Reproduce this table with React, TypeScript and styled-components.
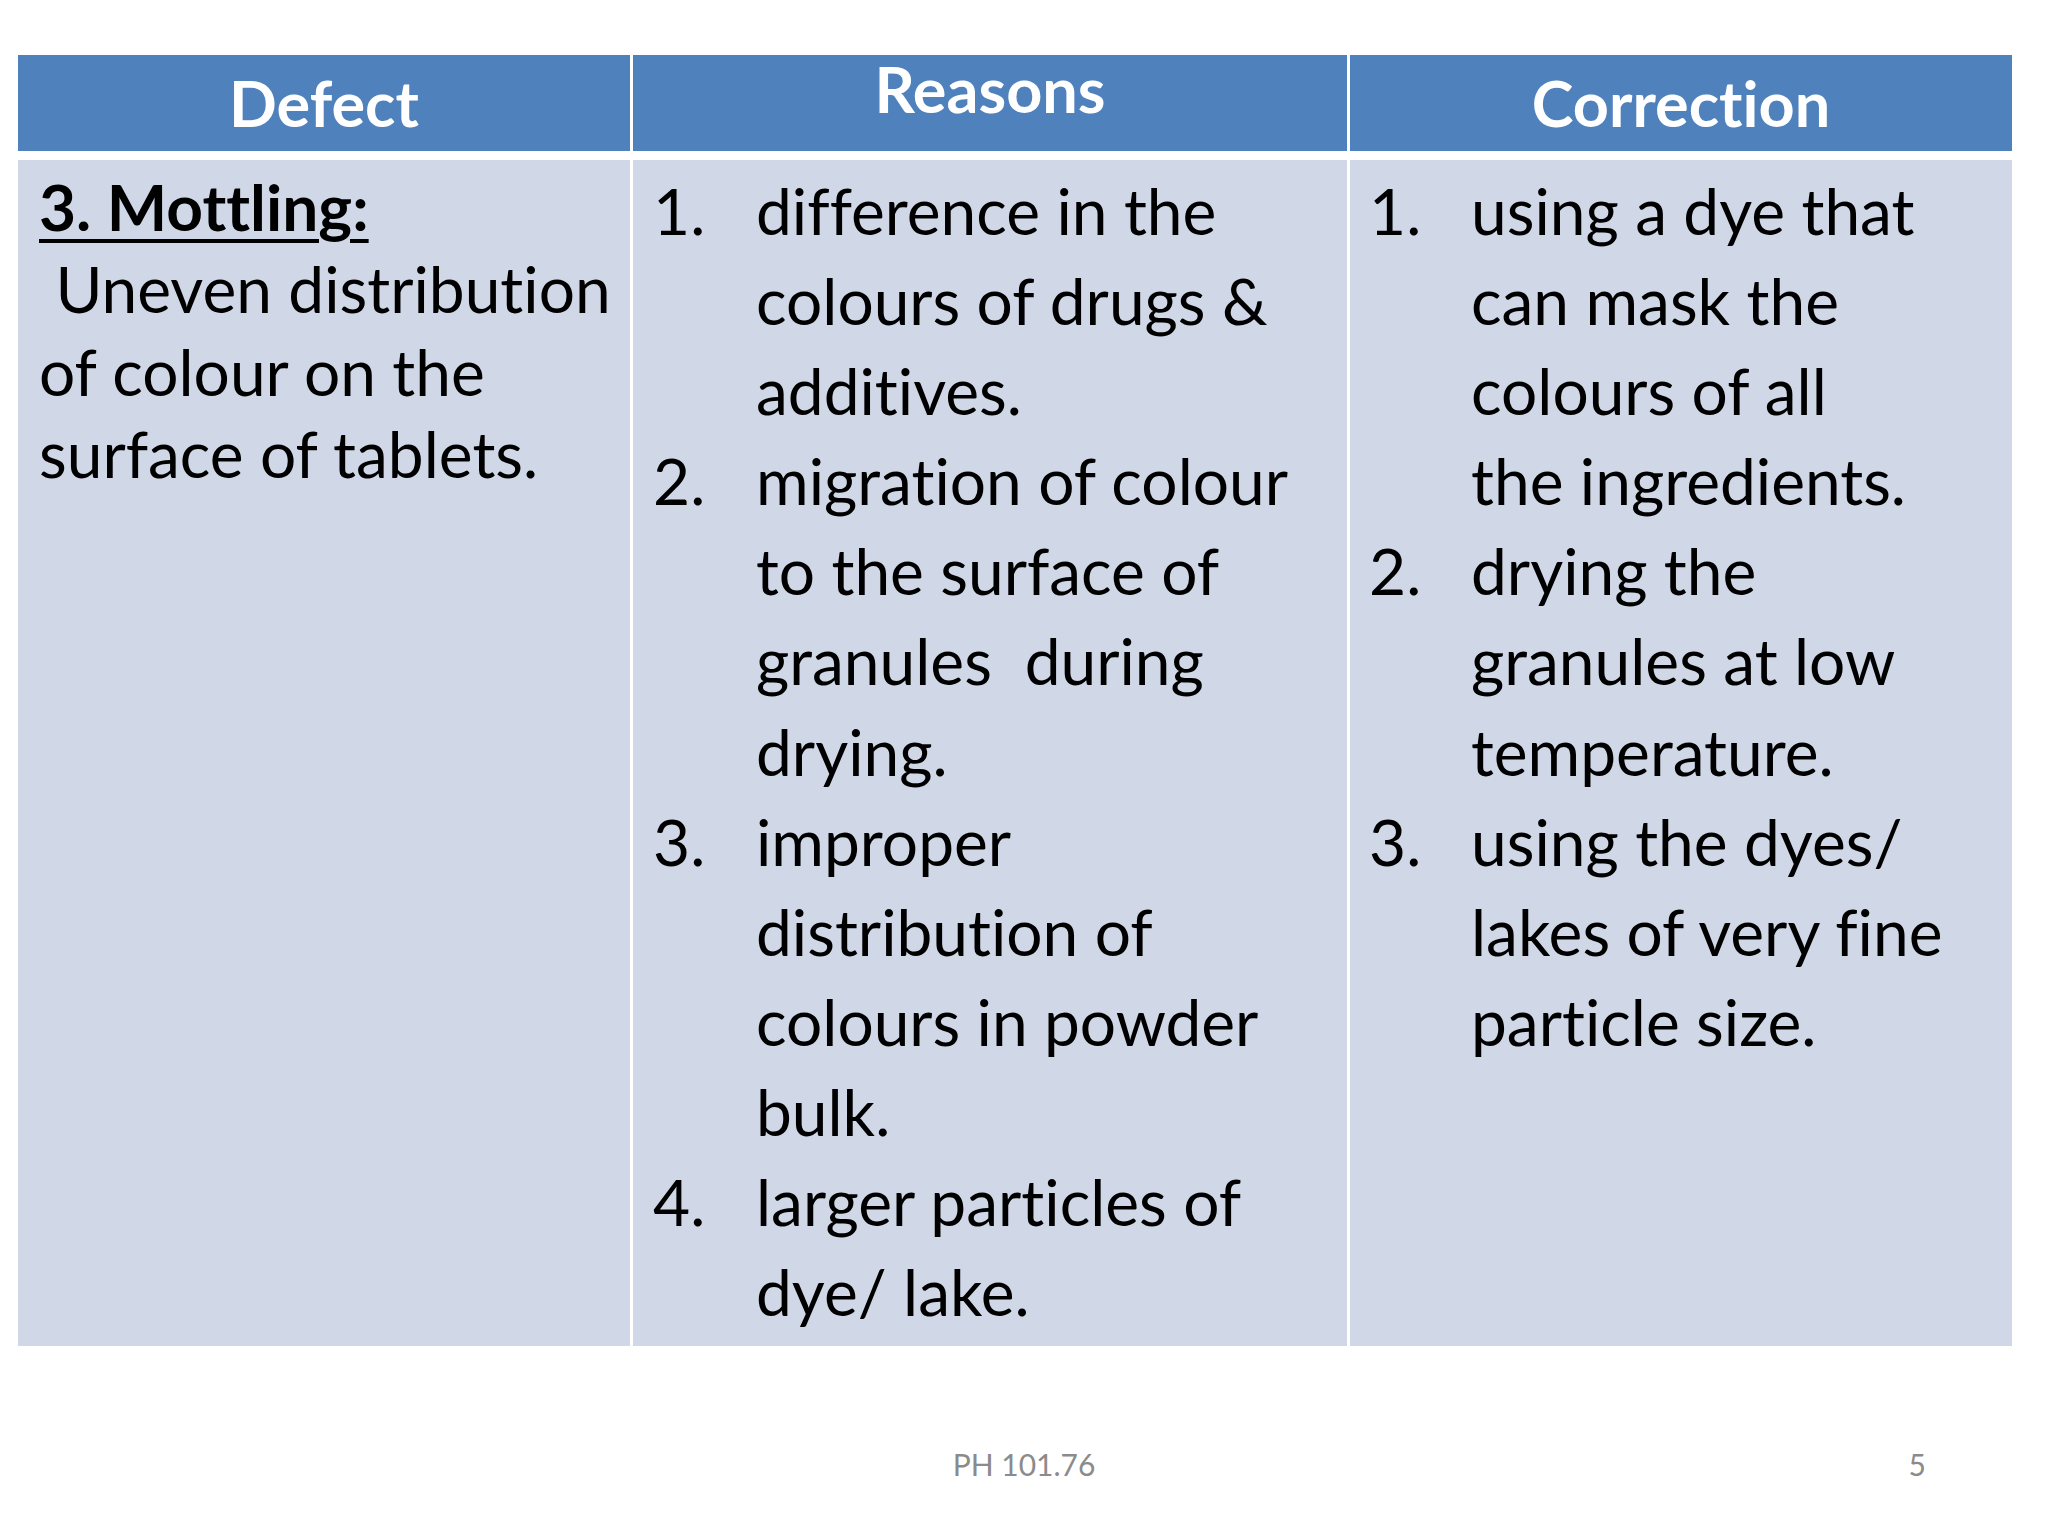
import styled, { createGlobalStyle } from 'styled-components';

const GlobalStyle = createGlobalStyle`
  html, body {
    margin: 0;
    padding: 0;
    background: #fff;
  }
  body {
    font-family: Lato, 'Open Sans', sans-serif;
    font-variant-ligatures: none;
  }
`;

const Slide = styled.div`
  width: 2048px;
  height: 1536px;
  box-sizing: border-box;
  display: flex;
  flex-direction: column;
  background: #fff;
  overflow: hidden;
`;

const Table = styled.div`
  margin: 55px 0 0 18px;
  width: 1994px;
  display: grid;
  grid-template-columns: 612px 714px 662px;
  grid-template-rows: 96px 1186px;
  column-gap: 3px;
  row-gap: 9px;
`;

const HeaderCell = styled.div<{ $top: number }>`
  background: #4f81bd;
  color: #fff;
  font-family: Lato, 'Open Sans', sans-serif;
  font-weight: 700;
  font-size: 63px;
  line-height: 64px;
  text-align: center;
  box-sizing: border-box;
  padding-top: ${(p) => p.$top}px;
`;

const BodyCell = styled.div<{ $pad: number; $left: number }>`
  background: #d0d8e8;
  color: #000;
  box-sizing: border-box;
  padding: ${(p) => p.$pad}px 16px 0 ${(p) => p.$left}px;
  font-family: Lato, 'Open Sans', sans-serif;
  font-size: 64px;
`;

const DefectCell = styled(BodyCell)`
  line-height: 82.3px;
`;

const DefectTitle = styled.div`
  font-weight: 700;
  text-decoration: underline;
  text-decoration-thickness: 4px;
  text-underline-offset: 8px;
`;

const DefectText = styled.div`
  white-space: pre;
`;

const List = styled.ol`
  margin: 0;
  padding: 0;
  list-style: none;
  line-height: 90.1px;
`;

const Item = styled.li<{ $numWidth: number }>`
  display: grid;
  grid-template-columns: ${(p) => p.$numWidth}px 1fr;
`;

const Num = styled.span``;

const Lines = styled.span`
  white-space: pre;
`;

const Footer = styled.div`
  margin-top: 103px;
  display: grid;
  grid-template-columns: 1fr auto 1fr;
  font-family: Lato, 'Open Sans', sans-serif;
  font-size: 30px;
  line-height: 30px;
  color: #8b8b8b;
`;

const FooterCenter = styled.div`
  grid-column: 2;
`;

const FooterPage = styled.div`
  grid-column: 3;
  justify-self: end;
  padding-right: 122px;
`;

const reasons = [
  ['difference in the', 'colours of drugs &', 'additives.'],
  ['migration of colour', 'to the surface of', 'granules\u00a0 during', 'drying.'],
  ['improper', 'distribution of', 'colours in powder', 'bulk.'],
  ['larger particles of', 'dye/ lake.'],
];

const corrections = [
  ['using a dye that', 'can mask the', 'colours of all', 'the ingredients.'],
  ['drying the', 'granules at low', 'temperature.'],
  ['using the dyes/', 'lakes of very fine', 'particle size.'],
];

function NumberedList({ items, numWidth }: { items: string[][]; numWidth: number }) {
  return (
    <List>
      {items.map((lines, i) => (
        <Item key={i} $numWidth={numWidth}>
          <Num>{i + 1}.</Num>
          <Lines>{lines.join('\n')}</Lines>
        </Item>
      ))}
    </List>
  );
}

export default function App() {
  return (
    <>
      <GlobalStyle />
      <Slide>
        <Table>
          <HeaderCell $top={16}>Defect</HeaderCell>
          <HeaderCell $top={2}>Reasons</HeaderCell>
          <HeaderCell $top={16}>Correction</HeaderCell>
          <DefectCell $pad={6} $left={21}>
            <DefectTitle>3. Mottling:</DefectTitle>
            <DefectText>{' Uneven distribution\nof colour on the\nsurface of tablets.'}</DefectText>
          </DefectCell>
          <BodyCell $pad={6} $left={20}>
            <NumberedList items={reasons} numWidth={103} />
          </BodyCell>
          <BodyCell $pad={6} $left={19}>
            <NumberedList items={corrections} numWidth={102} />
          </BodyCell>
        </Table>
        <Footer>
          <FooterCenter>PH 101.76</FooterCenter>
          <FooterPage>5</FooterPage>
        </Footer>
      </Slide>
    </>
  );
}
